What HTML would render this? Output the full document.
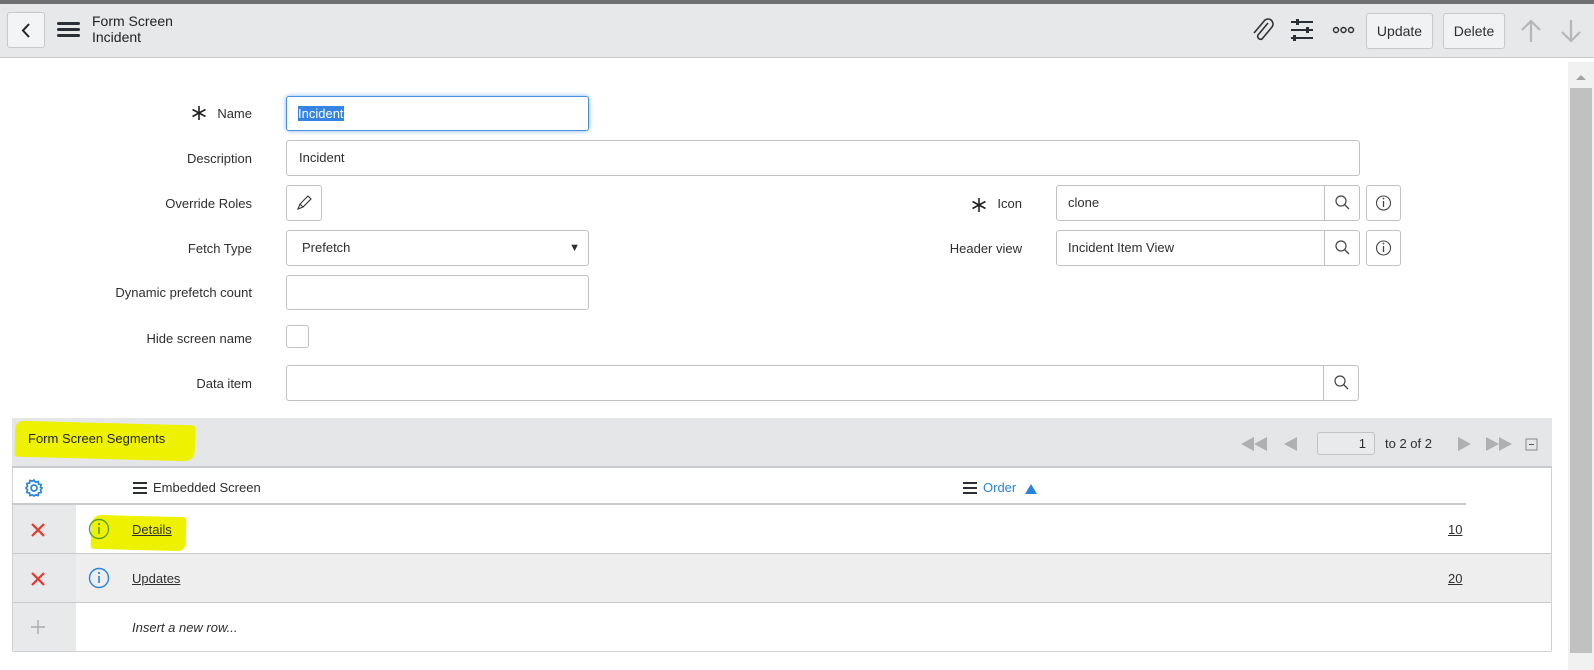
<!DOCTYPE html>
<html><head><style>
*{box-sizing:border-box;margin:0;padding:0}
body{width:1594px;height:670px;overflow:hidden;background:#fff;font-family:"Liberation Sans",sans-serif;font-size:13px;color:#2e2e2e;position:relative}
.a{position:absolute}
.top{left:0;top:0;width:1594px;height:4px;background:#707070}
.hdr{left:0;top:4px;width:1594px;height:54px;background:#e6e8ea;border-bottom:1px solid #c8cacc}
.btn{background:#f1f2f3;border:1px solid #c6c8ca;border-radius:3px;text-align:center;color:#2e2e2e}
.lbl{text-align:right;width:220px;color:#2e2e2e;font-size:13px}
.inp{border:1px solid #c0c2c4;border-radius:3px;background:#fff;padding-left:12px;font-size:13px}
.sb{border-left:1px solid #c0c2c4}
</style></head><body>
<div class="a top"></div>
<div class="a hdr"></div>
<div class="a btn" style="left:7px;top:12px;width:38px;height:36px;background:#f3f4f5"><svg width="37" height="35"><path d="M21 11l-6 6.5 6 6.5" fill="none" stroke="#222" stroke-width="2"/></svg></div>
<svg class="a" style="left:57px;top:21px" width="24" height="18"><rect y="1" width="23" height="3" rx="1.5" fill="#2a2f36"/><rect y="7" width="23" height="3" rx="1.5" fill="#2a2f36"/><rect y="13" width="23" height="3" rx="1.5" fill="#2a2f36"/></svg>
<div class="a" style="left:92px;top:13px;font-size:14px;line-height:16px;color:#222">Form Screen<br>Incident</div>
<svg class="a" style="left:1249px;top:17px" width="26" height="26"><path d="M19 6L9 18a3 3 0 0 0 4 4l10-12a5 5 0 0 0-7-7L5 16" fill="none" stroke="#333" stroke-width="1.6"/></svg>
<svg class="a" style="left:1290px;top:18px" width="24" height="24"><g stroke="#2a2f36" stroke-width="2"><line x1="1" y1="4" x2="23" y2="4"/><line x1="1" y1="12" x2="23" y2="12"/><line x1="1" y1="20" x2="23" y2="20"/></g><rect x="6" y="1" width="3" height="6" fill="#2a2f36"/><rect x="16" y="9" width="3" height="6" fill="#2a2f36"/><rect x="3" y="17" width="3" height="6" fill="#2a2f36"/></svg>
<svg class="a" style="left:1332px;top:26px" width="24" height="8"><g fill="none" stroke="#333" stroke-width="1.5"><circle cx="4" cy="4" r="2.5"/><circle cx="11.5" cy="4" r="2.5"/><circle cx="19" cy="4" r="2.5"/></g></svg>
<div class="a btn" style="left:1366px;top:13px;width:67px;height:36px;line-height:34px;font-size:14px">Update</div>
<div class="a btn" style="left:1443px;top:13px;width:62px;height:36px;line-height:34px;font-size:14px">Delete</div>
<svg class="a" style="left:1519px;top:18px" width="24" height="26"><path d="M12 24V3M3 12l9-9 9 9" fill="none" stroke="#b4b6b8" stroke-width="2.2"/></svg>
<svg class="a" style="left:1559px;top:18px" width="24" height="26"><path d="M12 2v21M3 14l9 9 9-9" fill="none" stroke="#b4b6b8" stroke-width="2.2"/></svg>
<!-- scrollbar -->
<div class="a" style="left:1568px;top:62px;width:26px;height:608px;background:#f1f1f1"></div>
<svg class="a" style="left:1575px;top:73px" width="12" height="8"><path d="M1 7l5-5 5 5z" fill="#a3a3a3"/></svg>
<div class="a" style="left:1570px;top:88px;width:22px;height:565px;background:#c1c1c1"></div>
<!-- form -->
<div class="a lbl" style="left:32px;top:106px">Name</div>
<svg class="a" style="left:191px;top:105px" width="16" height="16"><g stroke="#222" stroke-width="1.6"><line x1="8" y1="1" x2="8" y2="15"/><line x1="1.5" y1="4.5" x2="14.5" y2="11.5"/><line x1="1.5" y1="11.5" x2="14.5" y2="4.5"/></g></svg>
<div class="a inp" style="left:286px;top:96px;width:303px;height:35px;border-color:#4a90e2;box-shadow:0 0 5px #7ab4f0;padding-left:11px;line-height:33px"><span style="background:#3584e4;color:#fff">Incident</span></div>
<div class="a lbl" style="left:32px;top:151px">Description</div>
<div class="a inp" style="left:286px;top:140px;width:1074px;height:36px;line-height:34px">Incident</div>
<div class="a lbl" style="left:32px;top:196px">Override Roles</div>
<div class="a inp" style="left:286px;top:185px;width:36px;height:36px;padding:0"><svg width="34" height="34"><path d="M11 23l2-5 8-8 3 3-8 8z M13 18l3 3" fill="none" stroke="#333" stroke-width="1.1"/></svg></div>
<div class="a lbl" style="left:32px;top:241px">Fetch Type</div>
<div class="a inp" style="left:286px;top:230px;width:303px;height:36px;line-height:34px;padding-left:15px">Prefetch<span style="position:absolute;right:8px;font-size:11px">&#9660;</span></div>
<div class="a lbl" style="left:32px;top:285px">Dynamic prefetch count</div>
<div class="a inp" style="left:286px;top:275px;width:303px;height:35px"></div>
<div class="a lbl" style="left:32px;top:331px">Hide screen name</div>
<div class="a inp" style="left:286px;top:325px;width:23px;height:23px;padding:0"></div>
<div class="a lbl" style="left:32px;top:376px">Data item</div>
<div class="a inp" style="left:286px;top:365px;width:1073px;height:36px;padding:0"><div class="a sb" style="left:1036px;top:0;width:35px;height:34px"><svg width="34" height="34"><circle cx="16" cy="15" r="5" fill="none" stroke="#444" stroke-width="1.2"/><line x1="19.5" y1="18.5" x2="24" y2="23" stroke="#444" stroke-width="1.3"/></svg></div></div>
<div class="a lbl" style="left:802px;top:196px">Icon</div>
<svg class="a" style="left:971px;top:197px" width="16" height="16"><g stroke="#222" stroke-width="1.6"><line x1="8" y1="1" x2="8" y2="15"/><line x1="1.5" y1="4.5" x2="14.5" y2="11.5"/><line x1="1.5" y1="11.5" x2="14.5" y2="4.5"/></g></svg>
<div class="a inp" style="left:1056px;top:185px;width:304px;height:36px;line-height:34px;padding-left:11px">clone<div class="a sb" style="left:267px;top:0;width:35px;height:34px"><svg width="34" height="34"><circle cx="16" cy="15" r="5" fill="none" stroke="#444" stroke-width="1.2"/><line x1="19.5" y1="18.5" x2="24" y2="23" stroke="#444" stroke-width="1.3"/></svg></div></div>
<div class="a inp" style="left:1366px;top:185px;width:35px;height:36px;padding:0"><svg width="33" height="34"><circle cx="16.5" cy="17" r="7" fill="none" stroke="#444" stroke-width="1.1"/><line x1="16.5" y1="15" x2="16.5" y2="21" stroke="#444" stroke-width="1.3"/><circle cx="16.5" cy="12.5" r="0.9" fill="#444"/></svg></div>
<div class="a lbl" style="left:802px;top:241px">Header view</div>
<div class="a inp" style="left:1056px;top:230px;width:304px;height:36px;line-height:34px;padding-left:11px">Incident Item View<div class="a sb" style="left:267px;top:0;width:35px;height:34px"><svg width="34" height="34"><circle cx="16" cy="15" r="5" fill="none" stroke="#444" stroke-width="1.2"/><line x1="19.5" y1="18.5" x2="24" y2="23" stroke="#444" stroke-width="1.3"/></svg></div></div>
<div class="a inp" style="left:1366px;top:230px;width:35px;height:36px;padding:0"><svg width="33" height="34"><circle cx="16.5" cy="17" r="7" fill="none" stroke="#444" stroke-width="1.1"/><line x1="16.5" y1="15" x2="16.5" y2="21" stroke="#444" stroke-width="1.3"/><circle cx="16.5" cy="12.5" r="0.9" fill="#444"/></svg></div>
<!-- related list -->
<div class="a" style="left:12px;top:418px;width:1540px;height:234px;border:1px solid #d0d2d4;border-radius:2px"></div>
<div class="a" style="left:12px;top:418px;width:1540px;height:50px;background:#e4e6e8;border-bottom:2px solid #c8cacc"></div>
<div class="a" style="left:15px;top:423px;width:180px;height:36px;background:#eef200;border-radius:8px 3px 10px 3px;transform:rotate(1.5deg)"></div>
<div class="a" style="left:28px;top:431px;font-size:13px;color:#222">Form Screen Segments</div>
<svg class="a" style="left:1240px;top:436px" width="300" height="18"><g fill="#aeb0b2"><path d="M1 8l13-7v14z M14 8l13-7v14z M44 8l13-7v14z M218 1l13 7-13 7z M246 1l13 7-13 7z M259 1l13 7-13 7z"/></g><rect x="286" y="3" width="11" height="11" fill="none" stroke="#888" stroke-width="1"/><line x1="289" y1="8.5" x2="294" y2="8.5" stroke="#555"/></svg>
<div class="a" style="left:1317px;top:432px;width:58px;height:23px;border:1px solid #c0c2c4;border-radius:3px;background:#e8eaec;text-align:right;padding-right:8px;line-height:21px">1</div>
<div class="a" style="left:1385px;top:436px">to 2 of 2</div>
<!-- column header -->
<svg class="a" style="left:24px;top:478px" width="20" height="20"><g fill="none" stroke="#2a85d8" stroke-width="1.7"><circle cx="10" cy="10" r="3"/><path d="M10 2l1.5 2.2 2.6-.7.4 2.6 2.6.5-.6 2.6L18 10l-1.5 1.8.6 2.6-2.6.5-.4 2.6-2.6-.7L10 18l-1.5-1.2-2.6.7-.4-2.6-2.6-.5.6-2.6L2 10l1.5-1.8-.6-2.6 2.6-.5.4-2.6 2.6.7z"/></g></svg>
<svg class="a" style="left:133px;top:482px" width="15" height="12"><g fill="#2a2f36"><rect y="0" width="14" height="2"/><rect y="5" width="14" height="2"/><rect y="10" width="14" height="2"/></g></svg>
<div class="a" style="left:153px;top:480px">Embedded Screen</div>
<svg class="a" style="left:963px;top:482px" width="15" height="12"><g fill="#2a2f36"><rect y="0" width="14" height="2"/><rect y="5" width="14" height="2"/><rect y="10" width="14" height="2"/></g></svg>
<div class="a" style="left:983px;top:480px;color:#2a85d8">Order</div>
<svg class="a" style="left:1025px;top:484px" width="12" height="10"><path d="M0 10L6 0l6 10z" fill="#2a85d8"/></svg>
<div class="a" style="left:12px;top:503px;width:1454px;height:2px;background:#c8cacc"></div>
<!-- rows -->
<div class="a" style="left:13px;top:505px;width:63px;height:146px;background:#e8e9eb"></div>
<div class="a" style="left:76px;top:553px;width:1475px;height:49px;background:#eeeeee"></div>
<div class="a" style="left:13px;top:553px;width:1538px;height:1px;background:#c8cacc"></div>
<div class="a" style="left:13px;top:602px;width:1538px;height:1px;background:#c8cacc"></div>
<svg class="a" style="left:30px;top:522px" width="16" height="16"><path d="M2 2l12 12M14 2L2 14" stroke="#e8372c" stroke-width="2.2"/></svg>
<svg class="a" style="left:30px;top:571px" width="16" height="16"><path d="M2 2l12 12M14 2L2 14" stroke="#e8372c" stroke-width="2.2"/></svg>
<svg class="a" style="left:30px;top:619px" width="16" height="16"><path d="M8 1v14M1 8h14" stroke="#a9abad" stroke-width="1.4"/></svg>
<div class="a" style="left:91px;top:516px;width:95px;height:34px;background:#eef200;border-radius:10px 3px 8px 3px;transform:rotate(1.5deg)"></div>
<svg class="a" style="left:88px;top:518px" width="22" height="22"><circle cx="11" cy="11" r="9.5" fill="none" stroke="#5aa028" stroke-width="1.4"/><line x1="11" y1="9" x2="11" y2="16" stroke="#5aa028" stroke-width="1.6"/><circle cx="11" cy="6" r="1.1" fill="#5aa028"/></svg>
<svg class="a" style="left:88px;top:567px" width="22" height="22"><circle cx="11" cy="11" r="9.5" fill="none" stroke="#2a85d8" stroke-width="1.4"/><line x1="11" y1="9" x2="11" y2="16" stroke="#2a85d8" stroke-width="1.6"/><circle cx="11" cy="6" r="1.1" fill="#2a85d8"/></svg>
<div class="a" style="left:132px;top:522px;text-decoration:underline">Details</div>
<div class="a" style="left:132px;top:571px;text-decoration:underline">Updates</div>
<div class="a" style="left:132px;top:620px;font-style:italic">Insert a new row...</div>
<div class="a" style="left:1448px;top:522px;text-decoration:underline">10</div>
<div class="a" style="left:1448px;top:571px;text-decoration:underline">20</div>
</body></html>
